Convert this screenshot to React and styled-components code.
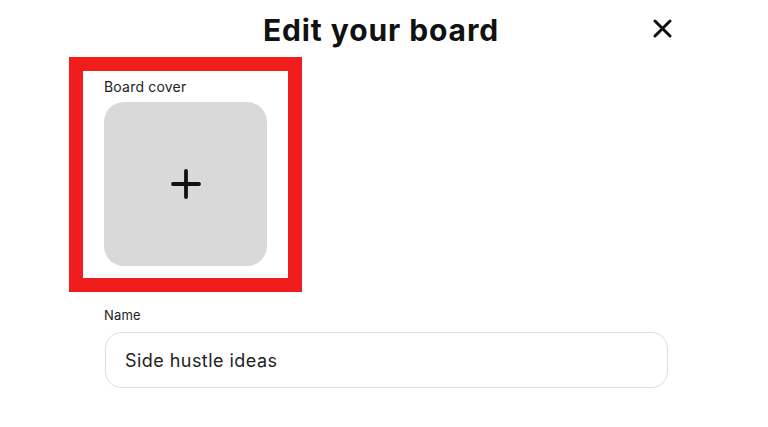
import React from "react";
import styled, { createGlobalStyle } from "styled-components";

const Global = createGlobalStyle`
  html, body { margin: 0; padding: 0; background: #fff; }
  body { font-family: Inter, "Noto Sans", "Liberation Sans", sans-serif; color: #111; }
`;

const Page = styled.div`
  width: 768px;
  height: 427px;
  overflow: hidden;
  display: flex;
  flex-direction: column;
  position: relative;
`;

const Header = styled.div`
  height: 57px;
  display: grid;
  grid-template-columns: 1fr auto 1fr;
  align-items: center;
`;

const Title = styled.h1`
  grid-column: 2;
  margin: 0;
  font-size: 30px;
  font-weight: 700;
  letter-spacing: 0.9px;
  color: #111;
  padding-right: 6px;
  padding-top: 2px;
`;

const Close = styled.button`
  grid-column: 3;
  justify-self: end;
  margin-right: 94px;
  width: 24px;
  height: 24px;
  padding: 0;
  border: none;
  background: none;
  display: flex;
  align-items: center;
  justify-content: center;
`;

const Body = styled.div`
  padding-left: 69px;
  display: flex;
  flex-direction: column;
  align-items: flex-start;
`;

const Highlight = styled.div`
  border: 14px solid #f11c1c;
  box-sizing: border-box;
  width: 233px;
  height: 235px;
  padding: 7px 0 11px 21px;
  display: flex;
  flex-direction: column;
  gap: 7px;
`;

const Label = styled.div`
  font-size: ${(p) => p.$size || 13}px;
  line-height: 17px;
  letter-spacing: 0.2px;
  color: #222;
`;

const Cover = styled.div`
  width: 163px;
  height: 164px;
  border-radius: 20px;
  background: #d9d9d9;
  display: flex;
  align-items: center;
  justify-content: center;
`;

const Field = styled.div`
  margin-top: 15px;
  padding-left: 35px;
  display: flex;
  flex-direction: column;
  gap: 8px;
`;

const Input = styled.div`
  width: 563px;
  height: 56px;
  box-sizing: border-box;
  border: 1.5px solid #dedede;
  border-radius: 16px;
  padding-left: 19px;
  display: flex;
  align-items: center;
  font-size: 18px;
  letter-spacing: 0.45px;
  color: #222;
  margin-left: 1px;
`;

export default function App() {
  return (
    <Page>
      <Global />
      <Header>
        <Title>Edit your board</Title>
        <Close aria-label="Close">
          <svg width="19" height="19" viewBox="0 0 19 19">
            <path d="M2 2 L17 17 M17 2 L2 17" stroke="#111" strokeWidth="3" strokeLinecap="round" />
          </svg>
        </Close>
      </Header>
      <Body>
        <Highlight>
          <Label $size={14}>Board cover</Label>
          <Cover>
            <svg width="30" height="30" viewBox="0 0 30 30">
              <path d="M15 2 V28 M2 15 H28" stroke="#111" strokeWidth="3.8" strokeLinecap="round" />
            </svg>
          </Cover>
        </Highlight>
        <Field>
          <Label>Name</Label>
          <Input>Side hustle ideas</Input>
        </Field>
      </Body>
    </Page>
  );
}
